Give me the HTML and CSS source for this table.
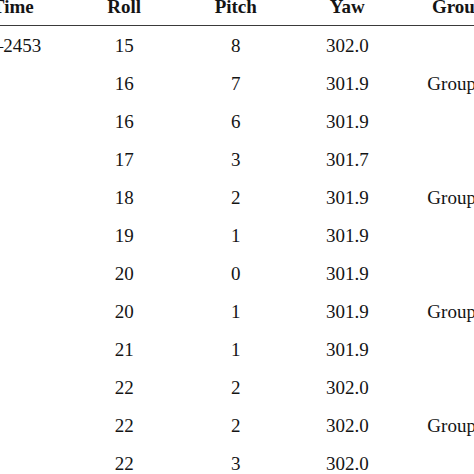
FILE: index.html
```html
<!DOCTYPE html>
<html>
<head>
<meta charset="utf-8">
<link rel="stylesheet" href="styles.css">
</head>
<body>
<div class="table">
  <div class="thead row">
    <div class="th">Time</div>
    <div class="th">Roll</div>
    <div class="th">Pitch</div>
    <div class="th">Yaw</div>
    <div class="th">Group</div>
  </div>
  <div class="tbody">
    <div class="row"><div class="td">1–2453</div><div class="td">15</div><div class="td">8</div><div class="td">302.0</div><div class="td"></div></div>
    <div class="row"><div class="td"></div><div class="td">16</div><div class="td">7</div><div class="td">301.9</div><div class="td">Group 1</div></div>
    <div class="row"><div class="td"></div><div class="td">16</div><div class="td">6</div><div class="td">301.9</div><div class="td"></div></div>
    <div class="row"><div class="td"></div><div class="td">17</div><div class="td">3</div><div class="td">301.7</div><div class="td"></div></div>
    <div class="row"><div class="td"></div><div class="td">18</div><div class="td">2</div><div class="td">301.9</div><div class="td">Group 2</div></div>
    <div class="row"><div class="td"></div><div class="td">19</div><div class="td">1</div><div class="td">301.9</div><div class="td"></div></div>
    <div class="row"><div class="td"></div><div class="td">20</div><div class="td">0</div><div class="td">301.9</div><div class="td"></div></div>
    <div class="row"><div class="td"></div><div class="td">20</div><div class="td">1</div><div class="td">301.9</div><div class="td">Group 3</div></div>
    <div class="row"><div class="td"></div><div class="td">21</div><div class="td">1</div><div class="td">301.9</div><div class="td"></div></div>
    <div class="row"><div class="td"></div><div class="td">22</div><div class="td">2</div><div class="td">302.0</div><div class="td"></div></div>
    <div class="row"><div class="td"></div><div class="td">22</div><div class="td">2</div><div class="td">302.0</div><div class="td">Group 4</div></div>
    <div class="row"><div class="td"></div><div class="td">22</div><div class="td">3</div><div class="td">302.0</div><div class="td"></div></div>
  </div>
</div>
</body>
</html>
```
FILE: styles.css
```css
html, body {
  margin: 0;
  padding: 0;
  background: #fff;
  overflow: hidden;
  width: 474px;
  height: 474px;
}
body {
  font-family: "Liberation Serif", "Times New Roman", serif;
  font-size: 19px;
  color: #141414;
}
.table {
  width: 557.5px;
  margin: -6px 0 0 -43px;
}
.row {
  display: grid;
  grid-template-columns: repeat(5, 111.5px);
  text-align: center;
  white-space: nowrap;
}
.thead {
  border-bottom: 1px solid #3a3a3a;
  padding-bottom: 6px;
}
.th {
  font-weight: bold;
  line-height: 25px;
}
.tbody {
  padding-top: 1px;
}
.td {
  line-height: 38px;
  height: 38px;
}
```
